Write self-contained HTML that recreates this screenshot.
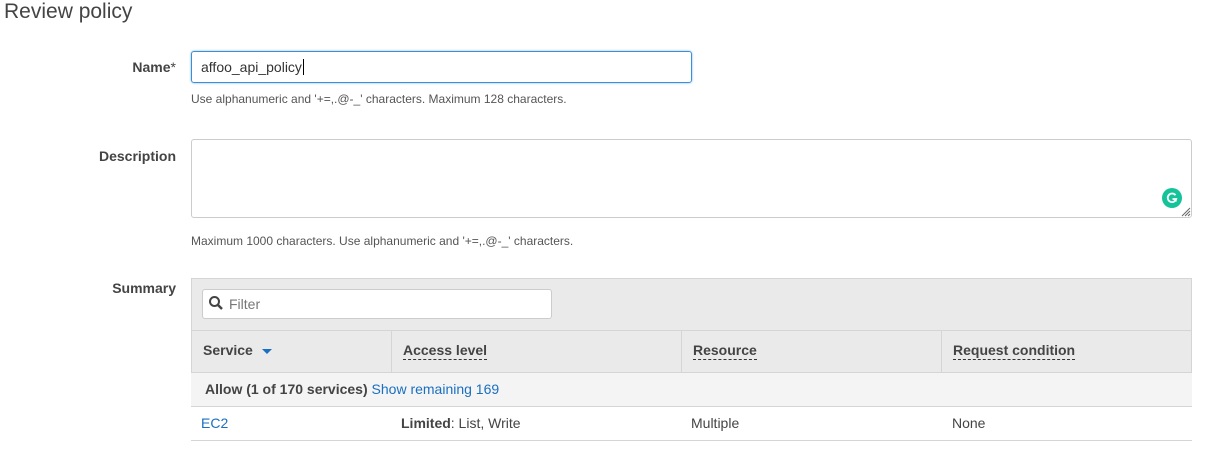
<!DOCTYPE html>
<html><head><style>
body{margin:0;background:#fff;font-family:"Liberation Sans",Arial,sans-serif;color:#333;width:1205px;height:453px;overflow:hidden;position:relative}
.a{position:absolute}
.lbl{font-weight:bold;font-size:14px;color:#444;text-align:right;width:176px;left:0}
.help{font-size:12px;color:#555;left:191px}
.dash{border-bottom:1px dashed #333;padding-bottom:1px}
.th{position:absolute;top:330px;height:42px;line-height:40px;font-weight:bold;font-size:14px;color:#444;padding-left:11px;box-sizing:border-box;border-left:1px solid #d5d5d5}
.td{position:absolute;top:407px;height:33px;line-height:33px;font-size:14px;color:#444;padding-left:10px;box-sizing:border-box}
</style></head><body>
<div class="a" style="left:4px;top:0;font-size:21px;color:#444">Review policy</div>

<div class="a lbl" style="top:59px">Name<span style="font-weight:normal">*</span></div>
<div class="a" style="left:191px;top:51px;width:501px;height:32px;box-sizing:border-box;border:1px solid #3b8fd6;border-radius:3px;box-shadow:0 0 2px #7bb3e6;font-size:14px;line-height:30px;padding-left:9px;color:#333">affoo_api_policy<span style="border-left:1px solid #000;margin-left:1px"></span></div>
<div class="a help" style="top:92px">Use alphanumeric and '+=,.@-_' characters. Maximum 128 characters.</div>

<div class="a lbl" style="top:148px">Description</div>
<div class="a" style="left:191px;top:139px;width:1001px;height:79px;box-sizing:border-box;border:1px solid #ccc;border-radius:3px"></div>
<div class="a" style="left:1162px;top:188px;width:20px;height:20px;border-radius:50%;background:#15c39a"><svg width="20" height="20"><path d="M13.5 7.2A4.3 4.3 0 1 0 14.2 11H10.5" fill="none" stroke="#fff" stroke-width="1.8"/><path d="M12 12.5l2.5-1.5l.2 2.8" fill="#fff"/></svg></div>
<svg class="a" style="left:1181px;top:207px" width="10" height="10"><path d="M1 9L9 1M4 9L9 4M7 9L9 7" stroke="#666" stroke-width="1"/></svg>
<div class="a help" style="top:234px">Maximum 1000 characters. Use alphanumeric and '+=,.@-_' characters.</div>

<div class="a lbl" style="top:280px">Summary</div>
<div class="a" style="left:191px;top:278px;width:1001px;height:95px;box-sizing:border-box;border:1px solid #d5d5d5;border-bottom:none;background:#eaeaea"></div>
<div class="a" style="left:202px;top:289px;width:350px;height:30px;box-sizing:border-box;border:1px solid #ccc;border-radius:3px;background:#fff;font-size:14px;line-height:28px;color:#777;padding-left:26px">Filter</div>
<svg class="a" style="left:208px;top:295px" width="16" height="16"><circle cx="6.5" cy="6.5" r="4.5" fill="none" stroke="#444" stroke-width="2"/><path d="M10 10l4 4" stroke="#444" stroke-width="2.5"/></svg>
<div class="a" style="left:192px;top:330px;width:999px;height:1px;background:#d5d5d5"></div>
<div class="th" style="left:192px;width:199px;border-left:none">Service <svg width="12" height="8" style="margin-left:4px"><path d="M1 2h10L6 7z" fill="#1a6fc0"/></svg></div>
<div class="th" style="left:391px;width:290px"><span class="dash">Access level</span></div>
<div class="th" style="left:681px;width:260px"><span class="dash">Resource</span></div>
<div class="th" style="left:941px;width:250px"><span class="dash">Request condition</span></div>
<div class="a" style="left:191px;top:372px;width:1001px;height:35px;background:#f4f4f4;border-top:1px solid #d5d5d5;border-bottom:1px solid #d5d5d5;font-size:14px;line-height:33px;padding-left:14px;box-sizing:border-box"><b style="color:#444">Allow (1 of 170 services)</b> <span style="color:#1a6fc0">Show remaining 169</span></div>
<div class="td" style="left:191px;color:#1a6fc0">EC2</div>
<div class="td" style="left:391px"><b>Limited</b>: List, Write</div>
<div class="td" style="left:681px">Multiple</div>
<div class="td" style="left:942px">None</div>
<div class="a" style="left:191px;top:440px;width:1001px;height:1px;background:#d5d5d5"></div>
</body></html>
